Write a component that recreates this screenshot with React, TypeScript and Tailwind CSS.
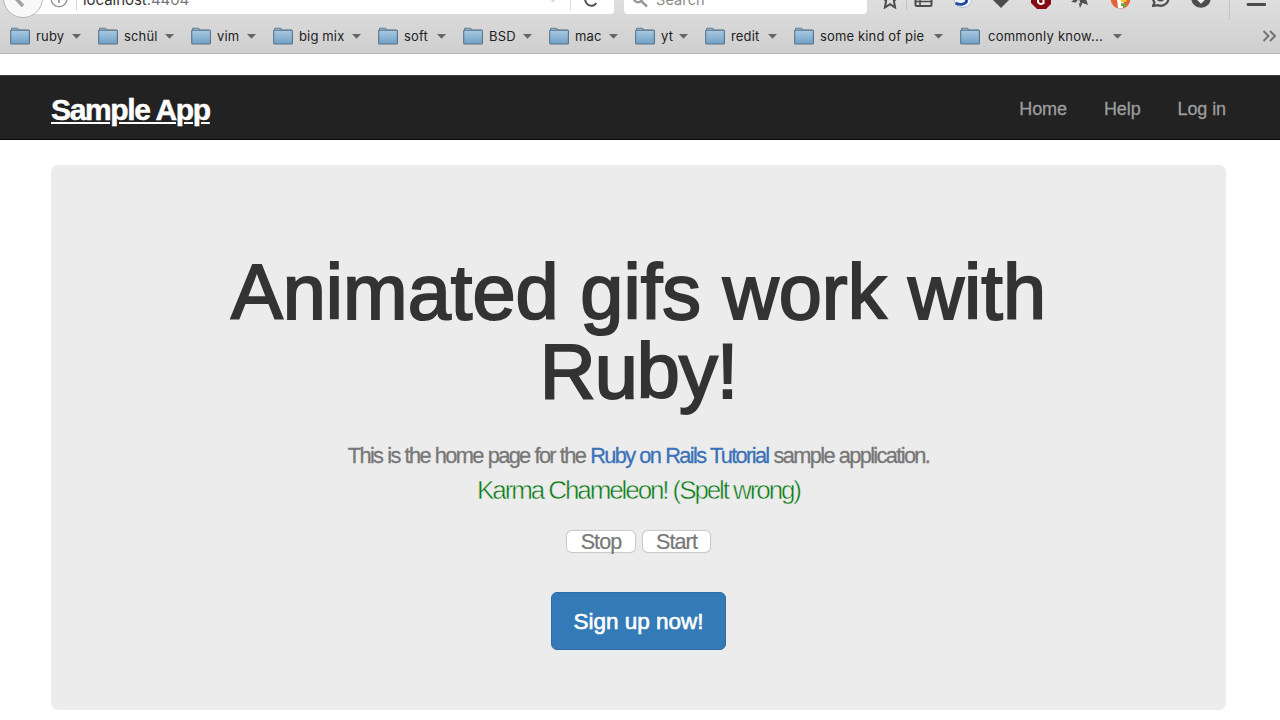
import React from 'react';
import clsx from 'clsx';

const bookmarks = [
  { label: 'ruby', width: 'w-[88px]' },
  { label: 'schül', width: 'w-[93px]' },
  { label: 'vim', width: 'w-[82px]' },
  { label: 'big mix', width: 'w-[105px]' },
  { label: 'soft', width: 'w-[85px]' },
  { label: 'BSD', width: 'w-[86px]' },
  { label: 'mac', width: 'w-[86px]' },
  { label: 'yt', width: 'w-[70px]' },
  { label: 'redit', width: 'w-[89px]' },
  { label: 'some kind of pie', width: 'w-[166px]' },
  { label: 'commonly know...', width: 'w-[179px]', className: 'pl-0.5 tracking-[0.25px]' },
];

const FolderIcon: React.FC = () => (
  <svg className="h-[18px] w-5 shrink-0" viewBox="0 0 20 18">
    <defs>
      <linearGradient id="folder" x1="0" y1="0" x2="0" y2="1">
        <stop offset="0" stopColor="#a9c9e2" />
        <stop offset="1" stopColor="#6fa0c6" />
      </linearGradient>
    </defs>
    <path d="M1.5 4V2.2q0-.9.9-.9H7q.7 0 1 .6l.6 1.2h10" fill="#9cbbd2" stroke="#66808f" strokeWidth="1.1" />
    <rect x=".7" y="3.3" width="18.7" height="13.7" rx=".8" fill="url(#folder)" stroke="#587388" strokeWidth="1.1" />
  </svg>
);

const AddressBar: React.FC = () => (
  <div className="flex h-8 w-[594px] items-center rounded-r bg-white pl-[30px]">
    <svg className="mt-0.5 h-[18px] w-[18px]" viewBox="0 0 18 18" fill="none" stroke="#999" strokeWidth="1.4">
      <circle cx="9" cy="9" r="7.8" />
      <path d="M9 8v5M9 4.5v1.5" strokeWidth="1.8" />
    </svg>
    <span className="ml-2 h-6 w-px bg-[#d5d5d5]" />
    <span className="mt-[5px] ml-1.5 text-[15px] tracking-[-0.05px] text-[#333]">
      localhost<span className="text-[#777]">:4404</span>
    </span>
    <svg className="mt-1 ml-auto h-2 w-2" viewBox="0 0 8 8">
      <path d="M0 2h8L4 7z" fill="#ead9dc" />
    </svg>
    <span className="ml-[13px] h-6 w-px bg-[#ddd]" />
    <svg className="mt-1 mr-[14px] ml-[11px] h-[18px] w-[18px]" viewBox="0 0 18 18" fill="none" stroke="#4f4f4f" strokeWidth="2">
      <path d="M13.5 4.5A6 6 0 1 0 14.3 12" />
      <path d="M10 6h5V1" />
    </svg>
  </div>
);

const SearchBox: React.FC = () => (
  <div className="ml-[10px] flex h-8 w-[243px] items-center rounded bg-white pl-2">
    <svg className="mt-[3px] h-4 w-4" viewBox="0 0 16 16" fill="none" stroke="#999" strokeWidth="2.4">
      <circle cx="6" cy="6" r="4.2" />
      <path d="M9 9l6 5.5" />
    </svg>
    <span className="mt-1 ml-2 text-[14.5px] tracking-[0.1px] text-[#8a8a8a]">Search</span>
  </div>
);

const ToolbarIcons: React.FC = () => (
  <div className="ml-[13px] flex items-center">
    <svg className="mt-px h-5 w-5" viewBox="0 0 20 20" fill="none" stroke="#4c4c4c" strokeWidth="2">
      <path d="M10 2l2.4 5.3 5.8.6-4.3 4 1.2 6.6-5.1-3.3-5.1 3.3 1.2-6.6-4.3-4 5.8-.6z" />
    </svg>
    <span className="mx-[6px] h-6 w-px bg-[#c3c3c3]" />
    <svg className="h-5 w-5" viewBox="0 0 20 20" fill="none" stroke="#4c4c4c" strokeWidth="2">
      <rect x="2.5" y="2" width="16" height="16" rx="1.5" />
      <path d="M7 2v16M2 13.5h16.5M2 9h16.5" strokeWidth="1.6" />
    </svg>
    <svg className="ml-[19px] h-5 w-5" viewBox="0 0 20 20" fill="none">
      <circle cx="11" cy="10.5" r="9" fill="#eef3fa" stroke="#a9bfdc" />
      <path d="M15.500 3C9 1 6 7 10.500 9s6.500 5.500-.5 7.300q-3 .5-6.500-1.300" stroke="#23499a" strokeWidth="2.800" />
    </svg>
    <svg className="ml-[19px] h-5 w-5" viewBox="0 0 20 20" fill="#4c4c4c">
      <path d="M10 20L1 11l4-6h10l4 6z" />
    </svg>
    <svg className="mt-px ml-5 h-5 w-5" viewBox="0 0 20 20">
      <path d="M6 0h8l6 6v9l-5 5H6l-6-6V6z" fill="#850c12" />
      <path d="M12.500 5v10M12.500 10.500a3 3 0 1 0 0 3" stroke="#fff" strokeWidth="2" fill="none" />
    </svg>
    <svg className="ml-[19px] h-5 w-5" viewBox="0 0 20 20" fill="#505050">
      <path d="M18 1L1 14l5 .5L8 12l2 8 2.500-5L18 17l-2-6 3-1z" />
      <path d="M6 14.500l3-4 1.500 5" fill="#d8d8d8" />
    </svg>
    <svg className="mt-px ml-5 h-5 w-5" viewBox="0 0 20 20">
      <circle cx="10.500" cy="10" r="9.800" fill="#df6337" />
      <path d="M6 2c5-1 9 3 8 8l-1 8.800q-3 1-5 0z" fill="#fff" />
      <path d="M11 10.500h6l-1 2.500h-5z" fill="#f5c426" />
      <path d="M11 14l5 1-1 3-4-1z" fill="#5fae3f" />
    </svg>
    <svg className="ml-5 h-5 w-5" viewBox="0 0 20 20" fill="none" stroke="#4c4c4c" strokeWidth="2.200">
      <path d="M3 18l1.500-3.500A7.800 7.800 0 1 1 8 17.200z" strokeLinejoin="round" />
      <path d="M6.500 10q4 5 8 0" />
    </svg>
    <svg className="mt-px ml-[21px] h-5 w-5" viewBox="0 0 20 20">
      <circle cx="10" cy="9" r="9.800" fill="#4c4c4c" />
      <path d="M10 3v8M6 9l4 4 4-4" stroke="#eee" strokeWidth="2.600" fill="none" />
    </svg>
    <span className="ml-[18px] h-11 w-px bg-[#c3c3c3]" />
    <svg className="ml-4 h-[18px] w-5" viewBox="0 0 20 18" stroke="#4c4c4c" strokeWidth="2.800" strokeLinecap="round">
      <path d="M2 3h17M2 9h17M2 15.500h17" />
    </svg>
  </div>
);

const BrowserChrome: React.FC = () => (
  <div className="h-[54px] overflow-hidden border-b border-[#b4b4b4] bg-linear-to-b from-[#dedede] to-[#cfcfcf] font-[Inter,sans-serif]">
    <div className="-mt-[18px] flex h-8 items-center">
      <div className="z-10 ml-[3px] flex h-10 w-10 shrink-0 items-center justify-center rounded-full border border-[#b5b5b5] bg-[#f8f8f8]">
        <svg className="h-5 w-5" viewBox="0 0 20 20" fill="none" stroke="#a3a3a3" strokeWidth="3.500">
          <path d="M10 2L2.500 10l7.500 8M3 10h15" />
        </svg>
      </div>
      <div className="-ml-[23px] shrink-0">
        <AddressBar />
      </div>
      <SearchBox />
      <ToolbarIcons />
    </div>
    <div className="flex h-10 items-center pt-1 pl-[10px]">
      {bookmarks.map((b) => (
        <div key={b.label} className={clsx('flex shrink-0 items-center pr-[17px]', b.width)}>
          <FolderIcon />
          <span className={clsx('ml-1.5 text-[13px] leading-4 whitespace-nowrap text-[#222]', b.className ?? 'tracking-[0.15px]')}>
            {b.label}
          </span>
          <svg className="ml-auto h-[5px] w-[9px] shrink-0" viewBox="0 0 8 5" preserveAspectRatio="none">
            <path d="M0 0h8L4 4.800z" fill="#666" />
          </svg>
        </div>
      ))}
      <svg className="ml-auto mr-[3px] h-3 w-[15px] shrink-0" viewBox="0 0 15 12" fill="none" stroke="#737373" strokeWidth="2">
        <path d="M1.500 1l5 5-5 5M8 1l5 5-5 5" />
      </svg>
    </div>
  </div>
);

const App: React.FC = () => {
  return (
    <div className="h-[720px] overflow-hidden bg-white font-['Liberation_Sans',Arial,sans-serif]">
      <BrowserChrome />
      <header className="mt-[21px] flex h-[65px] items-center justify-between border-t border-b border-t-[#3c3f3d] border-b-[#080808] bg-[#222] pr-[54px] pl-[51px]">
        <a className="mt-1 text-[30px] leading-9 font-bold tracking-[-1.350px] text-white underline decoration-2 underline-offset-2 [-webkit-text-stroke:0.500px_#fff]">
          Sample App
        </a>
        <nav className="flex gap-[37px] pt-[3px] text-[18px] tracking-[-0.100px] text-[#9d9d9d] [-webkit-text-stroke:0.300px_#9d9d9d]">
          <a>Home</a>
          <a>Help</a>
          <a>Log in</a>
        </nav>
      </header>
      <main className="mt-[25px] mr-[54px] ml-[51px] flex h-[545px] flex-col items-center rounded-[7px] bg-[#ececec] pt-[88px] text-[#777]">
        <h1 className="text-center text-[77.500px] leading-[79px] tracking-[0.050px] whitespace-nowrap text-[#333] [-webkit-text-stroke:2px_#333]">
          Animated gifs work with
          <br />
          <span className="tracking-[-1px]">Ruby!</span>
        </h1>
        <h2 className="mt-[30px] text-[21.800px] leading-[30px] tracking-[-1.650px] [word-spacing:0.5px] whitespace-nowrap [-webkit-text-stroke:0.300px_#777]">
          This is the home page for the{' '}
          <a className="text-[#3b72b8] [-webkit-text-stroke:0.300px_#3b72b8]">Ruby on Rails Tutorial</a> sample application.
        </h2>
        <p className="mt-px text-[26px] leading-9 tracking-[-2.100px] whitespace-nowrap text-[#087a12] [-webkit-text-stroke:0.500px_#ececec]">
          Karma Chameleon! (Spelt wrong)
        </p>
        <div className="mt-[23px] flex gap-2 text-[21.500px] leading-[20px] tracking-[-0.900px] [-webkit-text-stroke:0.200px_#777]">
          <button className="h-[21px] w-[68px] rounded-[5px] bg-white shadow-[0_0_1px_1px_#c8c8c8]">Stop</button>
          <button className="h-[21px] w-[67px] rounded-[5px] bg-white shadow-[0_0_1px_1px_#c8c8c8]">Start</button>
        </div>
        <a className="mt-10 flex h-[58px] w-[175px] items-center justify-center rounded-[6px] border border-[#2e6da4] bg-[#337ab7] pt-0.5 text-[22.500px] text-white [-webkit-text-stroke:0.600px_#fff]">
          Sign up now!
        </a>
      </main>
    </div>
  );
};

export default App;
